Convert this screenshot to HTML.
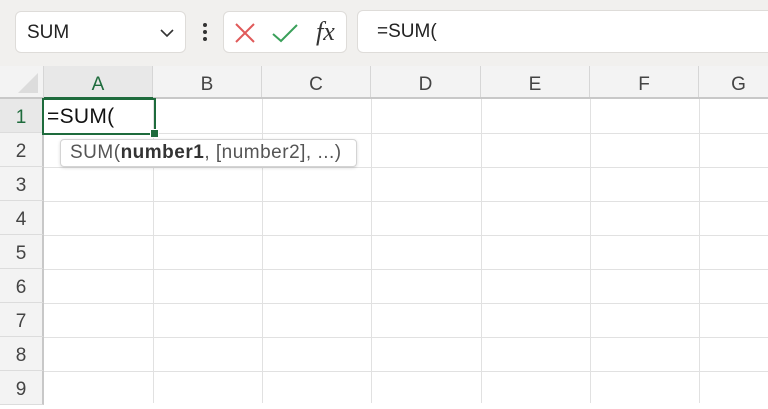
<!DOCTYPE html>
<html><head><style>
body{margin:0;width:768px;height:403px;overflow:hidden;background:#fff;font-family:"Liberation Sans",sans-serif;position:relative}
.tb{position:absolute;left:0;top:0;width:768px;height:66px;background:#f1f0ee}
.box{position:absolute;background:#fff;border:1px solid #dedcd9;border-radius:6px;box-sizing:border-box}
.ch{position:absolute;top:66px;height:33px;background:#f3f3f3;border-right:1px solid #d6d6d6;box-sizing:border-box;text-align:center;line-height:37px;font-size:19px;color:#444}
.rh{position:absolute;left:0;width:44px;height:34px;background:#f3f3f3;border-bottom:1px solid #dcdcdc;border-right:2px solid #c8c8c8;box-sizing:border-box;text-align:center;line-height:38px;font-size:19px;color:#444}
.vl{position:absolute;top:99px;bottom:0;width:1px;background:#e1e1e1}
.hl{position:absolute;left:44px;right:0;height:1px;background:#e1e1e1}
</style></head><body>
<div class="tb"></div>
<div class="box" style="left:15px;top:11px;width:171px;height:42px"><span style="position:absolute;left:11px;top:10px;font-size:19px;color:#222">SUM</span>
<svg style="position:absolute;left:144px;top:16px" width="14" height="10"><path d="M1 2 L7 8 L13 2" fill="none" stroke="#333" stroke-width="1.6"/></svg></div>
<div style="position:absolute;left:203px;top:23px;width:4px;height:4px;border-radius:2px;background:#333"></div>
<div style="position:absolute;left:203px;top:30px;width:4px;height:4px;border-radius:2px;background:#333"></div>
<div style="position:absolute;left:203px;top:37px;width:4px;height:4px;border-radius:2px;background:#333"></div>
<div class="box" style="left:223px;top:11px;width:124px;height:42px">
<svg style="position:absolute;left:10px;top:10px" width="22" height="22"><path d="M2 2 L20 20 M20 2 L2 20" stroke="#e05a5a" stroke-width="2"/></svg>
<svg style="position:absolute;left:47px;top:10px" width="28" height="22"><path d="M2 12 L10 19 L26 3" fill="none" stroke="#3aa05a" stroke-width="2"/></svg>
<span style="position:absolute;left:92px;top:5px;font-family:'Liberation Serif',serif;font-style:italic;font-size:26px;color:#333">fx</span></div>
<div class="box" style="left:357px;top:10px;width:420px;height:43px"><span style="position:absolute;left:19px;top:10px;font-size:19px;color:#222">=SUM(</span></div>

<div style="position:absolute;left:0;top:66px;width:44px;height:33px;background:#f3f3f3;border-right:1px solid #d6d6d6;box-sizing:border-box"></div>
<svg style="position:absolute;left:18px;top:73px" width="20" height="20"><path d="M20 0 L20 20 L0 20 Z" fill="#dcdcdc"/></svg>
<div class="ch" style="left:44px;width:109px;background:#e8e8e8;color:#1e6b3c;border-bottom:2px solid #1e6b3c">A</div>
<div class="ch" style="left:153px;width:109px">B</div>
<div class="ch" style="left:262px;width:109px">C</div>
<div class="ch" style="left:371px;width:110px">D</div>
<div class="ch" style="left:481px;width:109px">E</div>
<div class="ch" style="left:590px;width:109px">F</div>
<div class="ch" style="left:699px;width:80px">G</div>
<div style="position:absolute;left:0;top:97px;width:768px;height:2px;background:#c8c8c8"></div>
<div style="position:absolute;left:44px;top:97px;width:109px;height:2px;background:#1e6b3c"></div>

<div class="rh" style="top:99px;background:#e8e8e8;color:#1e6b3c;border-right-color:#1e6b3c">1</div>
<div class="rh" style="top:133px">2</div>
<div class="rh" style="top:167px">3</div>
<div class="rh" style="top:201px">4</div>
<div class="rh" style="top:235px">5</div>
<div class="rh" style="top:269px">6</div>
<div class="rh" style="top:303px">7</div>
<div class="rh" style="top:337px">8</div>
<div class="rh" style="top:371px">9</div>

<div class="vl" style="left:153px"></div><div class="vl" style="left:262px"></div><div class="vl" style="left:371px"></div><div class="vl" style="left:481px"></div><div class="vl" style="left:590px"></div><div class="vl" style="left:699px"></div>
<div class="hl" style="top:133px"></div><div class="hl" style="top:167px"></div><div class="hl" style="top:201px"></div><div class="hl" style="top:235px"></div><div class="hl" style="top:269px"></div><div class="hl" style="top:303px"></div><div class="hl" style="top:337px"></div><div class="hl" style="top:371px"></div>

<div style="position:absolute;left:42px;top:98px;width:114px;height:37px;border:2px solid #1e6b3c;box-sizing:border-box"></div>
<div style="position:absolute;left:150px;top:129px;width:7px;height:7px;background:#1e6b3c;border:1px solid #fff"></div>
<span style="position:absolute;left:47px;top:105px;font-size:21px;color:#111;letter-spacing:0.3px">=SUM(</span>

<div style="position:absolute;left:60px;top:139px;width:297px;height:28px;background:#fff;border:1px solid #d4d4d4;border-radius:4px;box-shadow:0 1px 3px rgba(0,0,0,.15);box-sizing:border-box;font-size:19px;color:#555;line-height:26px;padding-left:9px;white-space:nowrap;letter-spacing:0.5px">SUM(<b style="color:#333">number1</b>, [number2], ...)</div>
</body></html>
